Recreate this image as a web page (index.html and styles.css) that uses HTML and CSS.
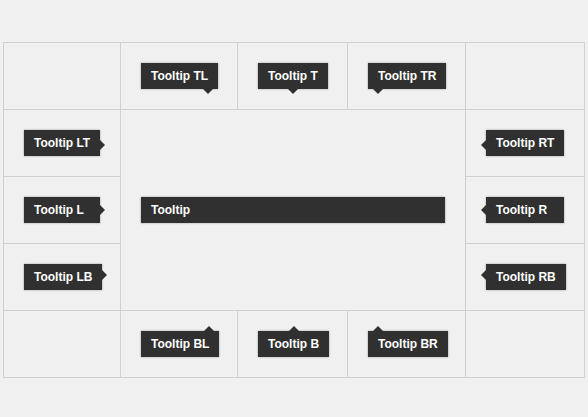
FILE: index.html
```html
<!DOCTYPE html>
<html>
<head>
<meta charset="utf-8">
<link rel="stylesheet" href="styles.css">
</head>
<body>
<div class="grid">
  <div class="cell"></div>
  <div class="cell"><div class="tip tip-tl">Tooltip TL</div></div>
  <div class="cell"><div class="tip tip-t">Tooltip T</div></div>
  <div class="cell"><div class="tip tip-tr">Tooltip TR</div></div>
  <div class="cell"></div>

  <div class="cell"><div class="tip tip-lt">Tooltip LT</div></div>
  <div class="cell center"><div class="tip">Tooltip</div></div>
  <div class="cell"><div class="tip tip-rt">Tooltip RT</div></div>

  <div class="cell"><div class="tip tip-l">Tooltip L</div></div>
  <div class="cell"><div class="tip tip-r">Tooltip R</div></div>

  <div class="cell"><div class="tip tip-lb">Tooltip LB</div></div>
  <div class="cell"><div class="tip tip-rb">Tooltip RB</div></div>

  <div class="cell"></div>
  <div class="cell"><div class="tip tip-bl">Tooltip BL</div></div>
  <div class="cell"><div class="tip tip-b">Tooltip B</div></div>
  <div class="cell"><div class="tip tip-br">Tooltip BR</div></div>
  <div class="cell"></div>
</div>
</body>
</html>
```

FILE: styles.css
```css
html, body {
  margin: 0;
  padding: 0;
  background: #f0f0f0;
}
body {
  padding: 42px 0 0 3px;
  font-family: "Liberation Sans", Arial, sans-serif;
}
.grid {
  display: grid;
  width: 582px;
  box-sizing: border-box;
  grid-template-columns: 116px 116px 109px 117px 118px;
  grid-template-rows: repeat(5, 66px);
  gap: 1px;
  padding: 1px;
  background: #d0d0d0;
}
.cell {
  background: #f0f0f0;
  display: flex;
  align-items: center;
  padding: 0 20px;
}
.center {
  grid-column: 2 / 5;
  grid-row: 2 / 5;
}
.tip {
  position: relative;
  flex: 1;
  height: 26px;
  line-height: 26px;
  padding: 0 10px;
  background: #303030;
  color: #fff;
  font-size: 12px;
  font-weight: bold;
  white-space: nowrap;
  box-shadow: 0 0 2px rgba(0, 0, 0, 0.35);
}
.tip::after {
  content: "";
  position: absolute;
  width: 0;
  height: 0;
  border: 5px solid transparent;
}
.tip:not([class*="tip-"])::after { display: none; }

/* arrows pointing down */
.tip-tl::after, .tip-t::after, .tip-tr::after {
  top: 100%;
  border-top-color: #303030;
  border-bottom-width: 0;
}
.tip-tl::after { right: 5px; }
.tip-t::after { left: 50%; margin-left: -5px; }
.tip-tr::after { left: 5px; }

/* arrows pointing up */
.tip-bl::after, .tip-b::after, .tip-br::after {
  bottom: 100%;
  border-bottom-color: #303030;
  border-top-width: 0;
}
.tip-bl::after { right: 5px; }
.tip-b::after { left: 50%; margin-left: -5px; }
.tip-br::after { left: 5px; }

/* arrows pointing right */
.tip-lt::after, .tip-l::after, .tip-lb::after {
  left: 100%;
  border-left-color: #303030;
  border-right-width: 0;
}
.tip-lt::after { top: 10px; }
.tip-l::after { top: 50%; margin-top: -5px; }
.tip-lb::after { bottom: 10px; }

/* arrows pointing left */
.tip-rt::after, .tip-r::after, .tip-rb::after {
  right: 100%;
  border-right-color: #303030;
  border-left-width: 0;
}
.tip-rt::after { top: 10px; }
.tip-r::after { top: 50%; margin-top: -5px; }
.tip-rb::after { bottom: 10px; }
```
